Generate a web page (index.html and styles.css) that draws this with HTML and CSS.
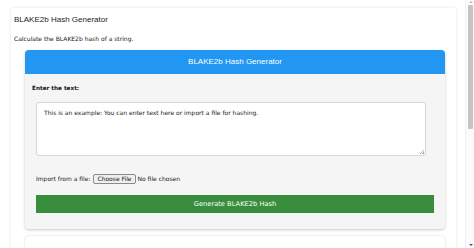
FILE: index.html
```html
<!DOCTYPE html>
<html lang="en">
<head>
<meta charset="utf-8">
<title>BLAKE2b Hash Generator</title>
<link rel="stylesheet" href="styles.css">
</head>
<body>
<div class="viewport">
  <main class="page">
    <section class="outer">
      <h1 class="title">BLAKE2b Hash Generator</h1>
      <p class="desc">Calculate the BLAKE2b hash of a string.</p>
      <div class="card">
        <div class="card-header">BLAKE2b Hash Generator</div>
        <div class="card-body">
          <label class="field-label" for="input">Enter the text:</label>
          <div class="content">
            <div class="textarea">This is an example: You can enter text here or import a file for hashing.<span class="grip"></span></div>
            <div class="import-row">
              <span>Import from a file:</span>
              <span class="file-btn">Choose File</span>
              <span>No file chosen</span>
            </div>
            <button class="generate">Generate BLAKE2b Hash</button>
          </div>
        </div>
      </div>
      <div class="card result"></div>
    </section>
  </main>
  <div class="scrollbar">
    <div class="arrow-up"></div>
    <div class="thumb"></div>
    <div class="track"></div>
    <div class="arrow-down"></div>
  </div>
</div>
</body>
</html>
```
FILE: styles.css
```css
* { box-sizing: border-box; }
html, body { margin: 0; padding: 0; height: 100%; overflow: hidden; background: #fff; }
body { font-family: "DejaVu Sans", Verdana, sans-serif; font-size: 6px; color: #1a1a1a; }

.viewport { display: flex; height: 248px; }
.page { flex: 1; padding: 8px 9px 0 11px; overflow: hidden; }

.outer {
  background: #fff;
  box-shadow: 0 0 3px rgba(0,0,0,0.12);
  border-radius: 2px;
  padding: 7px 11px 20px 14px;
  height: 300px;
}
.title {
  font-family: "Liberation Sans", Arial, sans-serif;
  font-weight: normal;
  font-size: 8px;
  line-height: 10px;
  margin: 0 0 0 -11px;
  color: #1a1a1a;
}
.desc {
  margin: 10px 0 7px -11px;
  line-height: 8px;
  font-size: 6px;
}

.card {
  border-radius: 4px;
  box-shadow: 0 1px 3px rgba(0,0,0,0.22);
  background: #f5f5f5;
}
.card-header {
  background: #2196f3;
  color: #fff;
  height: 24px;
  line-height: 24px;
  text-align: center;
  font-family: "Liberation Sans", Arial, sans-serif;
  font-size: 8px;
  border-radius: 4px 4px 0 0;
}
.card-body { padding: 10px 7px 16px 7px; }
.field-label {
  display: block;
  font-weight: bold;
  font-size: 5.7px;
  line-height: 8px;
  color: #111;
  margin-bottom: 10px;
}
.content { padding: 0 4px; }
.textarea {
  position: relative;
  height: 54px;
  margin-right: 8px;
  background: #fff;
  border: 1px solid #d6d6d6;
  border-radius: 3px;
  padding: 6px 7px;
  line-height: 8px;
}
.grip {
  position: absolute;
  right: 1px;
  bottom: 1px;
  width: 4px;
  height: 4px;
  background: linear-gradient(135deg, transparent 45%, #aaa 45%, #aaa 55%, transparent 55%, transparent 75%, #aaa 75%);
}
.import-row {
  display: flex;
  align-items: center;
  gap: 2px;
  margin-top: 18px;
  height: 10px;
  line-height: 8px;
}
.file-btn {
  margin-left: 1px;
  height: 10px;
  padding: 0 3px;
  border: 1px solid #8a8a8a;
  border-radius: 2px;
  background: #efefef;
  line-height: 8px;
  color: #111;
}
.generate {
  display: block;
  width: 100%;
  margin-top: 11px;
  height: 18px;
  border: 0;
  background: #388e3c;
  color: #fff;
  font-family: "DejaVu Sans", Verdana, sans-serif;
  font-size: 6.7px;
  line-height: 18px;
  padding: 0;
}
.card.result {
  margin-top: 7px;
  height: 40px;
  background: #fff;
  box-shadow: 0 0 2px rgba(0,0,0,0.2);
}

.scrollbar {
  width: 9px;
  display: flex;
  flex-direction: column;
  align-items: center;
  border-left: 1px solid #f0f0f0;
  background: #fbfbfb;
  padding: 1px 0 2px 1px;
}
.arrow-up, .arrow-down {
  width: 0; height: 0;
  border-left: 2px solid transparent;
  border-right: 2px solid transparent;
}
.arrow-up { border-bottom: 2px solid #bbb; margin-bottom: 2px; }
.arrow-down { border-top: 2px solid #555; margin-top: 2px; }
.thumb { width: 5px; height: 124px; background: #c4c4c4; border-radius: 1px; }
.track { flex: 1; }
```
